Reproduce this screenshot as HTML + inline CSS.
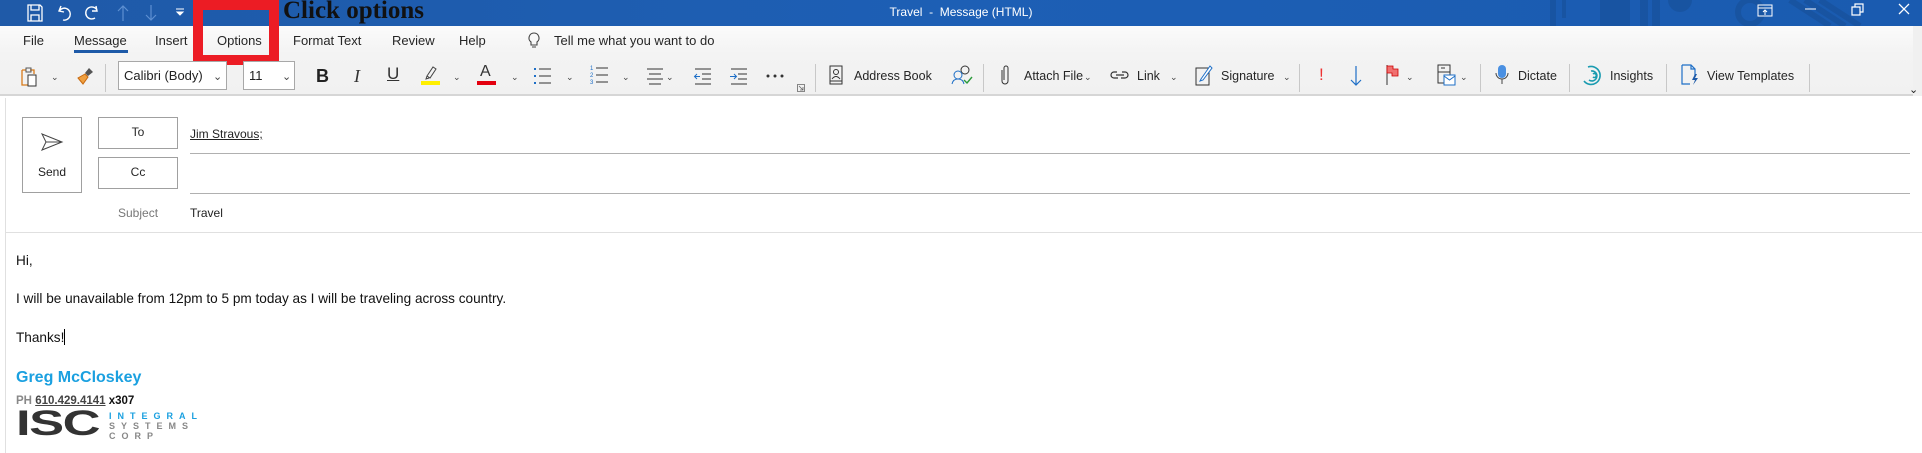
<!DOCTYPE html>
<html><head><meta charset="utf-8"><style>
*{margin:0;padding:0;box-sizing:border-box}
body{width:1922px;height:453px;position:relative;overflow:hidden;background:#fff;font-family:"Liberation Sans",sans-serif;color:#262626}
.a{position:absolute;white-space:nowrap}
#title{left:0;top:0;width:1922px;height:26px;background:linear-gradient(90deg,#1f5aa8,#1d5fb5 50%,#1a5bb0)}
#rib{left:0;top:26px;width:1913px;height:70px;background:linear-gradient(#fbfbfb,#f3f3f3 40%,#f1f1f1);border-bottom:2px solid #d6d6d6}
#ribR{left:1913px;top:26px;width:9px;height:70px;background:#f0f0f0}
.tab{font-size:13px;color:#262626;top:33px}
.r{font-size:12.5px;color:#262626;top:69px}
.sep{top:64px;width:1px;height:28px;background:#c8c8c8}
.box{border:1px solid #a8a8a8;background:#fff}
.cv{font-size:9px;color:#444}
.body{font-size:13.6px;color:#111}
svg{position:absolute;overflow:visible}
</style></head><body>
<div id="title" class="a"></div>
<svg style="left:1540px;top:0" width="380" height="26"><g fill="#174f98" opacity=".6"><rect x="10" y="0" width="6" height="26"/><rect x="22" y="0" width="4" height="18"/><rect x="60" y="0" width="30" height="26"/><rect x="100" y="0" width="8" height="26"/><rect x="112" y="0" width="8" height="26"/><circle cx="140" cy="0" r="12"/><circle cx="210" cy="12" r="12" fill="none" stroke="#174f98" stroke-width="6"/><path d="M250 0 L290 26 M265 0 L305 26 M280 0 L320 26" stroke="#174f98" stroke-width="6"/></g></svg>
<svg style="left:27px;top:4px" width="16" height="18"><path d="M1 1h12l2 2v14H1z M4 1v5h8V1 M4 17v-6h8v6" fill="none" stroke="#fff" stroke-width="1.3"/></svg>
<svg style="left:57px;top:4px" width="16" height="18"><path d="M4 2 L2 7 L7 8 M2.5 6.5 A6 6 0 1 1 6 16" fill="none" stroke="#fff" stroke-width="1.4"/></svg>
<svg style="left:84px;top:4px" width="16" height="18"><path d="M12 2 L13 7 L8 7 M13 6 A6 6 0 1 0 11 14" fill="none" stroke="#fff" stroke-width="1.4"/></svg>
<svg style="left:117px;top:4px" width="12" height="18"><path d="M6 17V2 M1 7l5-5 5 5" fill="none" stroke="#5d8fd1" stroke-width="1.2"/></svg>
<svg style="left:145px;top:4px" width="12" height="18"><path d="M6 1v15 M1 11l5 5 5-5" fill="none" stroke="#5d8fd1" stroke-width="1.2"/></svg>
<svg style="left:175px;top:8px" width="10" height="10"><path d="M1 1h8 M2 4l3 3 3-3z" fill="#fff" stroke="#fff"/></svg>
<div class="a" style="left:0;top:5px;width:1922px;text-align:center;font-size:12px;color:#fff">Travel&nbsp; -&nbsp; Message (HTML)</div>
<svg style="left:1757px;top:4px" width="16" height="14"><rect x="1" y="1" width="14" height="11" fill="none" stroke="#fff"/><path d="M1 4h14 M8 11V6 M6 8l2-2 2 2" fill="none" stroke="#fff"/></svg>
<svg style="left:1805px;top:8px" width="12" height="4"><path d="M0 1h11" stroke="#fff"/></svg>
<svg style="left:1851px;top:3px" width="14" height="14"><path d="M1 4h8v8H1z M4 4V1h8v8H9" fill="none" stroke="#fff" stroke-width="1.2"/></svg>
<svg style="left:1898px;top:3px" width="12" height="12"><path d="M1 1l10 10 M11 1L1 11" stroke="#fff" stroke-width="1.3"/></svg>
<div class="a" style="left:283px;top:-3px;font:bold 25px 'Liberation Serif',serif;color:#111">Click options</div>

<div id="rib" class="a"></div><div id="ribR" class="a"></div>
<div class="a tab" style="left:23px">File</div>
<div class="a tab" style="left:74px">Message</div>
<div class="a" style="left:74px;top:50px;width:54px;height:3px;background:#1e5aa8"></div>
<div class="a tab" style="left:155px">Insert</div>
<div class="a tab" style="left:217px">Options</div>
<div class="a tab" style="left:293px">Format Text</div>
<div class="a tab" style="left:392px">Review</div>
<div class="a tab" style="left:459px">Help</div>
<svg style="left:528px;top:32px" width="12" height="17"><path d="M6 1a5 5 0 0 0-3 9v3h6v-3a5 5 0 0 0-3-9z M4 15h4" fill="none" stroke="#444" stroke-width="1.1"/></svg>
<div class="a tab" style="left:554px">Tell me what you want to do</div>
<div class="a" style="left:193px;top:0;width:86px;height:65px;border:10px solid #ec1c24"></div>

<svg style="left:20px;top:67px" width="20" height="20"><path d="M2 3h4 M10 3h4v4 M2 3v15h6" fill="none" stroke="#d87b1a" stroke-width="1.3"/><rect x="6" y="1" width="5" height="4" fill="none" stroke="#555"/><rect x="8" y="8" width="8" height="11" fill="#fff" stroke="#333"/></svg>
<div class="a cv" style="left:51px;top:72px">⌄</div>
<svg style="left:75px;top:66px" width="20" height="20"><path d="M14 2l4 4-5 4-3-3z" fill="#555"/><path d="M10 8l-7 4 5 6 5-7z" fill="#f0a040" stroke="#c86a10"/></svg>
<div class="a sep" style="left:105px"></div>
<div class="a box" style="left:118px;top:61px;width:109px;height:29px"></div>
<div class="a" style="left:124px;top:68px;font-size:13px;color:#222">Calibri (Body)</div>
<div class="a cv" style="left:213px;top:70px;font-size:11px">⌄</div>
<div class="a box" style="left:243px;top:61px;width:52px;height:29px"></div>
<div class="a" style="left:249px;top:68px;font-size:13px;color:#222">11</div>
<div class="a cv" style="left:282px;top:70px;font-size:11px">⌄</div>
<div class="a" style="left:316px;top:66px;font-size:18px;font-weight:bold;color:#222">B</div>
<div class="a" style="left:354px;top:66px;font:italic 18px 'Liberation Serif',serif;color:#333">I</div>
<div class="a" style="left:387px;top:64px;font-size:17px;color:#333;text-decoration:underline">U</div>
<svg style="left:421px;top:64px" width="20" height="22"><path d="M6 12l6-9 3 2-6 9z M6 12l-1 3 3-1" fill="none" stroke="#444"/><rect x="0" y="17" width="19" height="4" fill="#ffef00"/></svg>
<div class="a cv" style="left:453px;top:72px">⌄</div>
<div class="a" style="left:480px;top:63px;font-size:16px;color:#333">A</div>
<div class="a" style="left:477px;top:81px;width:19px;height:4px;background:#e3000f"></div>
<div class="a cv" style="left:511px;top:72px">⌄</div>
<svg style="left:533px;top:67px" width="20" height="18"><g fill="#1e6fc7"><rect x="1" y="1" width="2" height="2"/><rect x="1" y="8" width="2" height="2"/><rect x="1" y="15" width="2" height="2"/></g><path d="M6 2h12 M6 9h12 M6 16h12" stroke="#333"/></svg>
<div class="a cv" style="left:566px;top:72px">⌄</div>
<svg style="left:590px;top:65px" width="20" height="20"><g fill="#1e6fc7" font-size="6" font-family="Liberation Sans"><text x="0" y="5">1</text><text x="0" y="12">2</text><text x="0" y="19">3</text></g><path d="M6 3h12 M6 10h12 M6 17h12" stroke="#333"/></svg>
<div class="a cv" style="left:622px;top:72px">⌄</div>
<svg style="left:646px;top:67px" width="18" height="18"><path d="M1 2h16 M3 7h12 M1 12h16 M3 17h12" stroke="#333"/></svg>
<div class="a cv" style="left:666px;top:72px">⌄</div>
<svg style="left:694px;top:67px" width="18" height="18"><path d="M1 2h16 M8 7h9 M8 12h9 M1 17h16" stroke="#333"/><path d="M6 9.5H1 M3 7l-2.5 2.5L3 12" fill="none" stroke="#1e6fc7"/></svg>
<svg style="left:730px;top:67px" width="18" height="18"><path d="M1 2h16 M8 7h9 M8 12h9 M1 17h16" stroke="#333"/><path d="M0 9.5h6 M4 7l2.5 2.5L4 12" fill="none" stroke="#1e6fc7"/></svg>
<svg style="left:766px;top:74px" width="18" height="4"><g fill="#333"><circle cx="2" cy="2" r="1.5"/><circle cx="9" cy="2" r="1.5"/><circle cx="16" cy="2" r="1.5"/></g></svg>
<svg style="left:797px;top:84px" width="8" height="8"><path d="M0.5 0.5h7v7h-7z M2 2l4 4 M6 3v3H3" fill="none" stroke="#666" stroke-width=".8"/></svg>
<div class="a sep" style="left:815px"></div>
<svg style="left:829px;top:65px" width="14" height="20"><rect x="1" y="1" width="12" height="18" fill="none" stroke="#333"/><circle cx="7" cy="7" r="2.5" fill="none" stroke="#333"/><path d="M3 14q4-5 8 0 M1 16h12" fill="none" stroke="#333"/></svg>
<div class="a r" style="left:854px">Address Book</div>
<svg style="left:951px;top:65px" width="22" height="20"><circle cx="14" cy="5" r="4" fill="none" stroke="#333"/><circle cx="7" cy="10" r="4" fill="none" stroke="#1e6fc7"/><path d="M1 19q1-5 6-5t6 5" fill="none" stroke="#1e6fc7"/><path d="M13 15l3 3 5-6" fill="none" stroke="#2a9a3a" stroke-width="1.4"/></svg>
<div class="a sep" style="left:983px"></div>
<svg style="left:1000px;top:64px" width="10" height="22"><path d="M2 6v11a3 3 0 0 0 6 0V4a2 2 0 0 0-4 0v12" fill="none" stroke="#333"/></svg>
<div class="a r" style="left:1024px">Attach File</div>
<div class="a cv" style="left:1084px;top:72px">⌄</div>
<svg style="left:1110px;top:68px" width="20" height="14"><path d="M7 4H4a3 3 0 0 0 0 6h4 M12 4h3a3 3 0 0 1 0 6h-4 M6 7h8" fill="none" stroke="#333" stroke-width="1.2"/></svg>
<div class="a r" style="left:1137px">Link</div>
<div class="a cv" style="left:1170px;top:72px">⌄</div>
<svg style="left:1195px;top:64px" width="18" height="22"><rect x="1" y="4" width="13" height="17" fill="none" stroke="#333"/><path d="M6 15L15 2l2 2-9 12-3 1z" fill="#fff" stroke="#1e6fc7"/></svg>
<div class="a r" style="left:1221px">Signature</div>
<div class="a cv" style="left:1283px;top:72px">⌄</div>
<div class="a sep" style="left:1299px"></div>
<div class="a" style="left:1319px;top:65px;font-size:17px;color:#e33">!</div>
<svg style="left:1350px;top:65px" width="12" height="22"><path d="M6 1v19 M1 15l5 5 5-5" fill="none" stroke="#1e6fc7" stroke-width="1.2"/></svg>
<svg style="left:1386px;top:64px" width="14" height="22"><path d="M1 1v20" stroke="#333"/><path d="M1 2h6v3h5v7H6V9H1z" fill="#f07070" stroke="#c00" stroke-width=".8"/></svg>
<div class="a cv" style="left:1406px;top:72px">⌄</div>
<svg style="left:1437px;top:64px" width="20" height="22"><path d="M1 1h12v18H1z M4 4h4 M1 8h12" fill="none" stroke="#333"/><rect x="7" y="11" width="11" height="10" fill="#fff" stroke="#1e6fc7"/><path d="M7 12l5.5 4 5.5-4" fill="none" stroke="#1e6fc7"/></svg>
<div class="a cv" style="left:1460px;top:72px">⌄</div>
<div class="a sep" style="left:1480px"></div>
<svg style="left:1495px;top:64px" width="14" height="22"><rect x="3" y="1" width="8" height="13" rx="4" fill="#4a90e2"/><path d="M1 9a6 6 0 0 0 12 0 M7 15v5" fill="none" stroke="#444"/></svg>
<div class="a r" style="left:1518px">Dictate</div>
<div class="a sep" style="left:1569px"></div>
<svg style="left:1582px;top:64px" width="22" height="22"><path d="M6 3a9 9 0 1 1-4 14 M9 7a5 5 0 1 1-2 9 M11 10a2 2 0 1 1 0 3" fill="none" stroke="#1a9bb0" stroke-width="1.6"/></svg>
<div class="a r" style="left:1610px">Insights</div>
<div class="a sep" style="left:1666px"></div>
<svg style="left:1681px;top:64px" width="18" height="22"><path d="M1 1h9l4 4v8 M1 1v19h8 M10 1v4h4" fill="none" stroke="#1e6fc7" stroke-width="1.2"/><path d="M14 10l-3 6h3l-2 5 5-7h-3l2-4z" fill="#1e5aa8"/></svg>
<div class="a r" style="left:1707px">View Templates</div>
<div class="a sep" style="left:1809px"></div>
<div class="a cv" style="left:1909px;top:83px;font-size:11px;color:#222">⌄</div>

<div class="a" style="left:5px;top:98px;width:1px;height:355px;background:#e0e0e0"></div>
<div class="a box" style="left:22px;top:117px;width:60px;height:76px;border-color:#a0a0a0"></div>
<svg style="left:41px;top:133px" width="22" height="18"><path d="M1 1l20 8-20 8 4-8z M5 9h16" fill="none" stroke="#444" stroke-width="1"/></svg>
<div class="a" style="left:22px;top:165px;width:60px;text-align:center;font-size:12px;color:#222">Send</div>
<div class="a box" style="left:98px;top:117px;width:80px;height:32px;border-color:#a0a0a0"></div>
<div class="a" style="left:98px;top:125px;width:80px;text-align:center;font-size:12px">To</div>
<div class="a box" style="left:98px;top:157px;width:80px;height:32px;border-color:#a0a0a0"></div>
<div class="a" style="left:98px;top:165px;width:80px;text-align:center;font-size:12px">Cc</div>
<div class="a" style="left:190px;top:127px;font-size:12px;color:#222;text-decoration:underline">Jim Stravous;</div>
<div class="a" style="left:190px;top:153px;width:1720px;height:1px;background:#b0b0b0"></div>
<div class="a" style="left:190px;top:193px;width:1720px;height:1px;background:#b0b0b0"></div>
<div class="a" style="left:118px;top:206px;font-size:12px;color:#777">Subject</div>
<div class="a" style="left:190px;top:206px;font-size:12px;color:#222">Travel</div>
<div class="a" style="left:5px;top:232px;width:1917px;height:1px;background:#e0e0e0"></div>

<div class="a body" style="left:16px;top:253px">Hi,</div>
<div class="a body" style="left:16px;top:291px">I will be unavailable from 12pm to 5 pm today as I will be traveling across country.</div>
<div class="a body" style="left:16px;top:329px">Thanks!<span style="display:inline-block;width:1px;height:16px;background:#000;vertical-align:-3px"></span></div>
<div class="a" style="left:16px;top:369px;font-size:16px;font-weight:bold;color:#1aa0e0">Greg McCloskey</div>
<div class="a" style="left:16px;top:395px;font-size:11.5px;font-weight:bold;color:#111"><span style="color:#888">PH</span> <span style="color:#444;text-decoration:underline">610.429.4141</span> x307</div>
<div class="a" style="left:16px;top:406px;font:900 35px/36px 'Liberation Sans',sans-serif;color:#333;letter-spacing:-1px;transform:scaleX(1.5);transform-origin:top left">ISC</div>
<div class="a" style="left:109px;top:411px;font:bold 9px/10px 'Liberation Sans',sans-serif;letter-spacing:6px;color:#1aa0e0">INTEGRAL</div>
<div class="a" style="left:109px;top:421px;font:bold 9px/10px 'Liberation Sans',sans-serif;letter-spacing:6px;color:#888">SYSTEMS</div>
<div class="a" style="left:109px;top:431px;font:bold 9px/10px 'Liberation Sans',sans-serif;letter-spacing:6px;color:#888">CORP</div>
</body></html>
